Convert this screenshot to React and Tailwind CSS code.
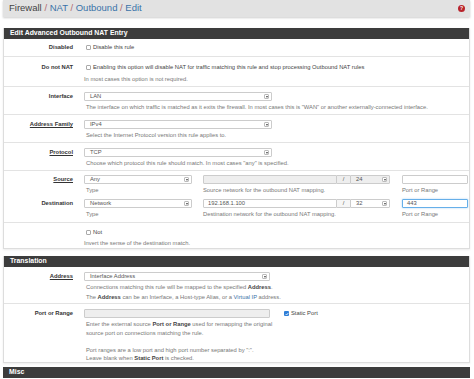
import React from "react";

const Caret = () => (
  <span className="w-[5px] h-[5px] border border-[#bbb] rounded-[1px] flex items-center justify-center mr-[2px] bg-white">
    <span className="block w-0 h-0 border-l-[1.5px] border-r-[1.5px] border-t-[2px] border-l-transparent border-r-transparent border-t-[#444]"></span>
  </span>
);

const Select = ({ value, className = "", disabled }) => (
  <div
    className={`h-[9px] border border-[#ccc] rounded-[1px] flex items-center justify-between pl-[5px] text-[5.8px] text-[#555] ${
      disabled ? "bg-[#eee]" : "bg-white"
    } ${className}`}
  >
    <span>{value}</span>
    <Caret />
  </div>
);

const Input = ({ value, className = "", disabled, focus }) => (
  <div
    className={`h-[9px] rounded-[1px] flex items-center pl-[4px] text-[5.8px] text-[#555] ${
      focus ? "border border-[#66afe9] shadow-[0_0_2px_rgba(102,175,233,0.6)]" : "border border-[#ccc]"
    } ${disabled ? "bg-[#eee]" : "bg-white"} ${className}`}
  >
    {value}
  </div>
);

const Check = ({ checked }) =>
  checked ? (
    <span className="w-[5px] h-[5px] rounded-[1px] bg-[#2f7fd8] flex items-center justify-center shrink-0">
      <svg width="4" height="4" viewBox="0 0 4 4">
        <path d="M0.6 2 L1.6 3 L3.4 0.9" stroke="white" strokeWidth="0.8" fill="none" />
      </svg>
    </span>
  ) : (
    <span className="w-[5px] h-[5px] rounded-[1px] border border-[#aaa] bg-white shrink-0"></span>
  );

const Label = ({ children, underline, className = "" }) => (
  <div className={`w-[69px] shrink-0 text-right font-bold text-[5.8px] leading-[7px] text-[#333] ${className}`}>
    <span className={underline ? "underline decoration-[#333] underline-offset-[1px]" : ""}>{children}</span>
  </div>
);

const Help = ({ children, className = "" }) => (
  <div className={`text-[5.8px] leading-[7px] text-[#777] whitespace-nowrap ${className}`}>{children}</div>
);

const Row = ({ children, className = "", first }) => (
  <div className={`flex ${first ? "" : "border-t border-[#e3e3e3]"} ${className}`}>{children}</div>
);

const Header = ({ children }) => (
  <div className="h-[11px] bg-[#3c3c3c] flex items-center pl-[6px] text-white font-bold text-[6.9px]">
    {children}
  </div>
);

export default function App() {
  return (
    <div className="w-[474px] h-[379px] overflow-hidden bg-white font-[family-name:Liberation_Sans,Arial,sans-serif]">
      {/* breadcrumb bar */}
      <div className="ml-[3px] w-[467px] h-[17px] bg-[#e2e2e2] shadow-[0_1px_2px_rgba(0,0,0,0.2)] flex items-center justify-between pl-[6px] pr-[5px]">
        <div className="text-[9.5px] text-[#444]">
          Firewall <span className="text-[#b06a70]">/</span> <span className="text-[#3a73a9]">NAT</span>{" "}
          <span className="text-[#b06a70]">/</span> <span className="text-[#3a73a9]">Outbound</span>{" "}
          <span className="text-[#b06a70]">/</span> <span className="text-[#3a73a9]">Edit</span>
        </div>
        <span className="w-[7px] h-[7px] rounded-full bg-[#b8232b] text-white text-[5px] font-bold flex items-center justify-center leading-none">
          ?
        </span>
      </div>

      {/* Edit panel */}
      <div className="ml-[3px] mt-[11px] w-[467px] border border-[#ddd] border-t-0 shadow-[0_1px_2px_rgba(0,0,0,0.08)]">
        <Header>Edit Advanced Outbound NAT Entry</Header>
        <Row first className="h-[17px] items-center">
          <Label>Disabled</Label>
          <div className="ml-[13px] flex items-center gap-[2px] text-[5.8px] text-[#444]">
            <Check />
            <span>Disable this rule</span>
          </div>
        </Row>
        <Row className="h-[30px] pt-[7px]">
          <Label>Do not NAT</Label>
          <div className="ml-[13px]">
            <div className="flex items-center gap-[2px] text-[5.8px] leading-[7px] text-[#444] whitespace-nowrap">
              <Check />
              <span>
                Enabling this option will disable NAT for traffic matching this rule and stop processing Outbound NAT rules
              </span>
            </div>
            <Help className="mt-[5px] -ml-[2px]">In most cases this option is not required.</Help>
          </div>
        </Row>
        <Row className="h-[28px] pt-[5px]">
          <Label className="pt-[1px]">Interface</Label>
          <div className="ml-[11px]">
            <Select value="LAN" className="w-[188px]" />
            <Help className="mt-[3px] ml-[2px]">
              The interface on which traffic is matched as it exits the firewall. In most cases this is "WAN" or another
              externally-connected interface.
            </Help>
          </div>
        </Row>
        <Row className="h-[28px] pt-[5px]">
          <Label underline className="pt-[1px]">
            Address Family
          </Label>
          <div className="ml-[11px]">
            <Select value="IPv4" className="w-[188px]" />
            <Help className="mt-[3px] ml-[2px]">Select the Internet Protocol version this rule applies to.</Help>
          </div>
        </Row>
        <Row className="h-[28px] pt-[5px]">
          <Label underline className="pt-[1px]">
            Protocol
          </Label>
          <div className="ml-[11px]">
            <Select value="TCP" className="w-[188px]" />
            <Help className="mt-[3px] ml-[2px]">
              Choose which protocol this rule should match. In most cases "any" is specified.
            </Help>
          </div>
        </Row>
        <Row className="h-[52px] pt-[4px]">
          <div>
            <Label underline className="pt-[1px]">
              Source
            </Label>
            <Label className="mt-[17px]">Destination</Label>
          </div>
          <div className="ml-[11px] flex flex-col gap-[5px]">
            <div className="flex">
              <div className="w-[108px]">
                <Select value="Any" />
                <Help className="mt-[3px] ml-[2px]">Type</Help>
              </div>
              <div className="ml-[11px] w-[187px]">
                <div className="flex">
                  <Input disabled className="w-[134px] rounded-r-none" />
                  <div className="w-[13px] h-[9px] border-y border-[#ccc] bg-[#eee] text-[5.8px] text-[#555] flex items-center justify-center">
                    /
                  </div>
                  <Select disabled value="24" className="w-[40px] rounded-l-none" />
                </div>
                <Help className="mt-[3px]">Source network for the outbound NAT mapping.</Help>
              </div>
              <div className="ml-[12px] w-[66px]">
                <Input />
                <Help className="mt-[3px]">Port or Range</Help>
              </div>
            </div>
            <div className="flex">
              <div className="w-[108px]">
                <Select value="Network" />
                <Help className="mt-[3px] ml-[2px]">Type</Help>
              </div>
              <div className="ml-[11px] w-[187px]">
                <div className="flex">
                  <Input value="192.168.1.100" className="w-[134px] rounded-r-none" />
                  <div className="w-[13px] h-[9px] border-y border-[#ccc] bg-[#f6f6f6] text-[5.8px] text-[#555] flex items-center justify-center">
                    /
                  </div>
                  <Select value="32" className="w-[40px] rounded-l-none" />
                </div>
                <Help className="mt-[3px]">Destination network for the outbound NAT mapping.</Help>
              </div>
              <div className="ml-[12px] w-[66px]">
                <Input value="443" focus />
                <Help className="mt-[3px]">Port or Range</Help>
              </div>
            </div>
          </div>
        </Row>
        <Row className="h-[26px] pt-[6px]">
          <Label></Label>
          <div className="ml-[13px]">
            <div className="flex items-center gap-[2px] text-[5.8px] leading-[7px] text-[#444]">
              <Check />
              <span>Not</span>
            </div>
            <Help className="mt-[4px] -ml-[2px]">Invert the sense of the destination match.</Help>
          </div>
        </Row>
      </div>

      {/* Translation panel */}
      <div className="ml-[3px] mt-[7px] w-[467px] border border-[#ddd] border-t-0 shadow-[0_1px_2px_rgba(0,0,0,0.08)]">
        <Header>Translation</Header>
        <Row first className="h-[36px] pt-[5px]">
          <Label underline className="pt-[1px]">
            Address
          </Label>
          <div className="ml-[11px]">
            <Select value="Interface Address" className="w-[186px]" />
            <Help className="mt-[1px] ml-[2px] leading-[10px]">
              Connections matching this rule will be mapped to the specified <b className="text-[#444]">Address</b>.
              <br />
              The <b className="text-[#444]">Address</b> can be an Interface, a Host-type Alias, or a{" "}
              <span className="text-[#3a73a9]">Virtual IP</span> address.
            </Help>
          </div>
        </Row>
        <Row className="h-[59px] pt-[5px]">
          <Label className="pt-[1px]">Port or Range</Label>
          <div className="ml-[11px] flex">
            <div className="w-[186px]">
              <Input disabled />
              <Help className="mt-[2px] ml-[2px] leading-[8.5px]">
                Enter the external source <b className="text-[#444]">Port or Range</b> used for remapping the original
                <br />
                source port on connections matching the rule.
                <br />
                <span className="block h-[8.5px]"></span>
                Port ranges are a low port and high port number separated by ":".
                <br />
                Leave blank when <b className="text-[#444]">Static Port</b> is checked.
              </Help>
            </div>
            <div className="ml-[14px] h-[9px] flex items-center gap-[2px] text-[5.8px] text-[#444]">
              <Check checked />
              <span>Static Port</span>
            </div>
          </div>
        </Row>
      </div>

      {/* Misc panel */}
      <div className="ml-[3px] mt-[4px] w-[467px]">
        <Header>Misc</Header>
      </div>
    </div>
  );
}
